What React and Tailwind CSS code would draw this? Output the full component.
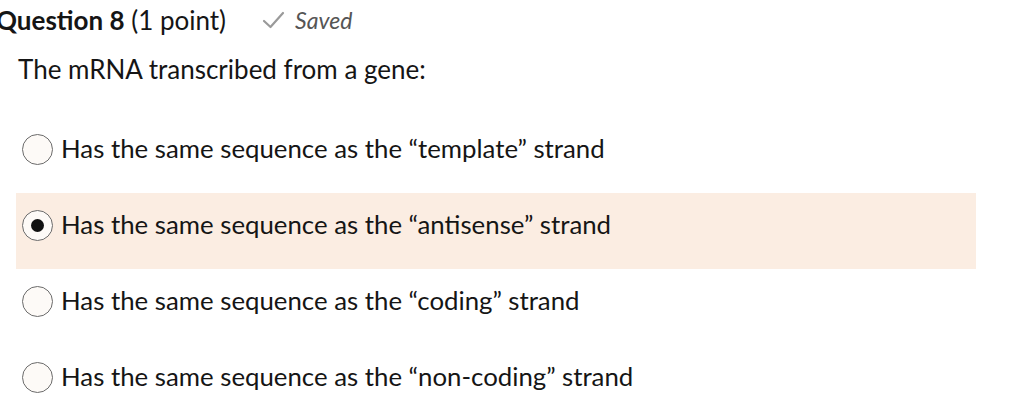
import React from 'react';

const options = [
  { id: 'a', label: 'Has the same sequence as the \u201ctemplate\u201d strand' },
  { id: 'b', label: 'Has the same sequence as the \u201cantisense\u201d strand', checked: true },
  { id: 'c', label: 'Has the same sequence as the \u201ccoding\u201d strand' },
  { id: 'd', label: 'Has the same sequence as the \u201cnon-coding\u201d strand' },
];

function Radio({ checked }) {
  return (
    <span className="flex h-[31px] w-[31px] shrink-0 items-center justify-center rounded-full border-[1.5px] border-[#6b6b6b] bg-[#fdfaf7]">
      {checked && <span className="h-[13px] w-[13px] rounded-full bg-[#111]" />}
    </span>
  );
}

export default function App() {
  return (
    <div className="h-[420px] w-[1024px] overflow-hidden bg-white text-[#151515] font-['Lato','Liberation_Sans',sans-serif]">
      <div className="flex h-[40px] items-center ml-[-4px]">
        <h2 className="text-[26px] leading-none">
          <span className="font-bold">Question 8</span> (1 point)
        </h2>
        <span className="ml-[36px] flex items-center gap-[10px] text-[#555]">
          <svg width="23" height="19" viewBox="0 0 23 19" fill="none">
            <path d="M2 10 L8.5 16 L21 2" stroke="#9a9a9a" strokeWidth="2.2" strokeLinecap="round" strokeLinejoin="round" />
          </svg>
          <span className="italic text-[23px] leading-none">Saved</span>
        </span>
      </div>
      <p className="mt-[9px] ml-[18px] text-[26px] leading-[40px]">The mRNA transcribed from a gene:</p>
      <div className="mt-[28px] flex flex-col">
        {options.map((o) => (
          <label
            key={o.id}
            className={`ml-[16px] mr-[48px] flex h-[76px] items-center gap-[8px] pl-[6px] pb-[12px] ${o.checked ? 'bg-[#fbede2]' : ''}`}
          >
            <Radio checked={o.checked} />
            <span className="text-[25.8px] leading-none">{o.label}</span>
          </label>
        ))}
      </div>
    </div>
  );
}
